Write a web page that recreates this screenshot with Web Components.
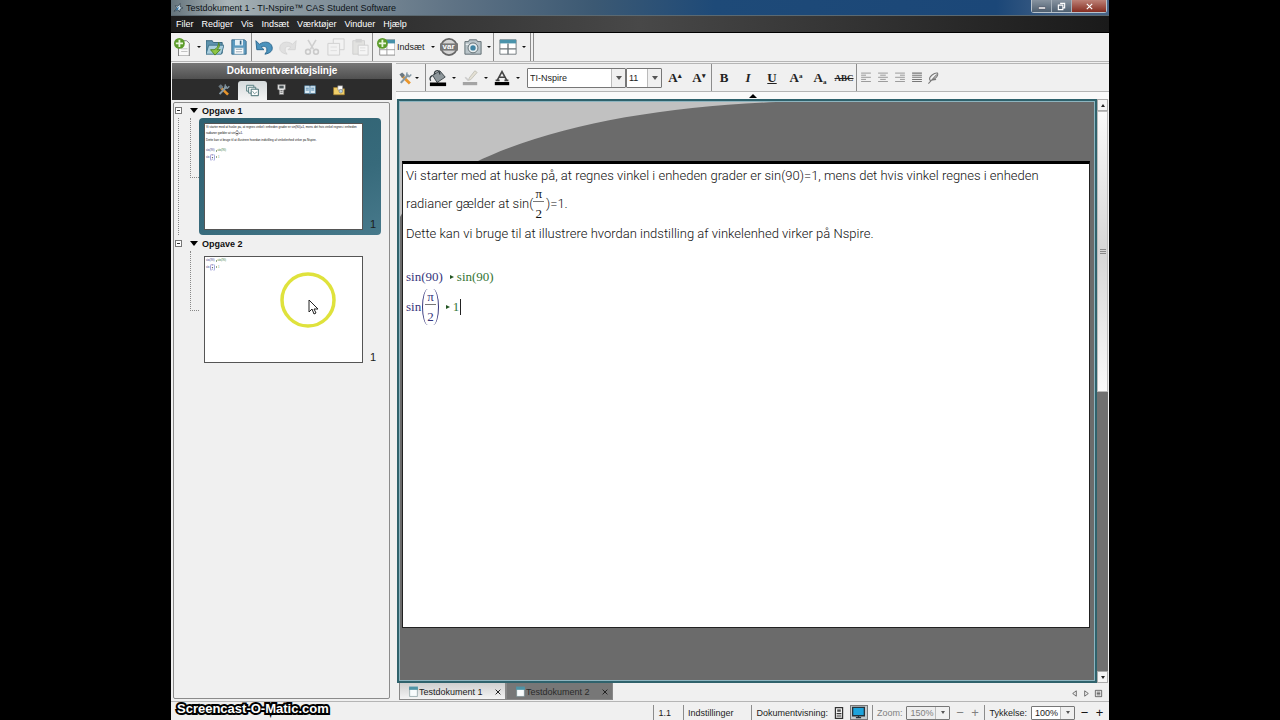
<!DOCTYPE html>
<html lang="da">
<head>
<meta charset="utf-8">
<title>Testdokument 1 - TI-Nspire™ CAS Student Software</title>
<style>
  body {
    margin: 0;
    background: #000;
    font: 9px/12px "Liberation Sans", Arial, sans-serif;
    color: #1c1c1c;
  }
</style>
</head>
<body>
<nspire-app></nspire-app>

<script>
const ICONS = {
  app: '<path d="M2 15l5-6-3-4 5 1 4-5 0 6 5 2-5 2-1 5-3-4z" fill="#cfe0ea" stroke="#14232f"/><path d="M6 13l4-5" stroke="#2a72a8" stroke-width="2"/>',
  add: '<path d="M5 3h9l3 3v14H5z" fill="#f8f8f8" stroke="#777"/><path d="M8 12h7M8 15h7" stroke="#bbb"/><circle cx="6" cy="6" r="6" fill="#5c9c2b"/><path d="M6 2v8M2 6h8" stroke="#e8f5dc" stroke-width="2"/>',
  open: '<path d="M0 3h7l1 2h10v12H0z" fill="#5e93ad" stroke="#2f6079"/><path d="M3 8h17l-3 10H0z" fill="#a9cede" stroke="#3d7088"/><path d="M14 5c2 4 0 7-2 8h4l-6 6-5-6h4c3-1 5-4 5-8z" fill="#8fc744" stroke="#4d8220"/>',
  save: '<path d="M1 1h16l2 2v16H1z" fill="#5b9ac0" stroke="#2d5f80"/><path d="M5 1h10v7H5z" fill="#e6f0f6"/><path d="M12 2v5" stroke="#2d5f80" stroke-width="2"/><path d="M4 11h12v8H4z" fill="#fff" stroke="#7aa5bd"/><path d="M6 13h8M6 16h8" stroke="#89a"/>',
  undo: '<path d="M1 3l1 10h8l-3-3c4-2 7 0 6 5l-2 3c6-1 9-4 8-8-1-6-9-7-14-3z" fill="#4b93bd" stroke="#27648c"/>',
  redo: '<path d="M19 3l-1 10h-8l3-3c-4-2-7 0-6 5l2 3c-6-1-9-4-8-8 1-6 9-7 14-3z" fill="#e0e0e0" stroke="#d4d4d4"/>',
  cut: '<path d="M5 1l7 12M15 1L8 13" stroke="#cfcfcf" stroke-width="2"/><circle cx="5" cy="16" r="3" fill="none" stroke="#cacaca" stroke-width="2"/><circle cx="15" cy="16" r="3" fill="none" stroke="#cacaca" stroke-width="2"/>',
  copy: '<path d="M7 1h12v12H7z" fill="#f2f2f2" stroke="#cecece"/><path d="M1 6h13v13H1z" fill="#f2f2f2" stroke="#cecece"/><path d="M4 10h7M4 14h7" stroke="#ddd"/>',
  paste: '<path d="M2 3h13v15H2z" fill="#e2e2e0" stroke="#cecece"/><path d="M5 1h7v4H5z" fill="#d2d2d2"/><path d="M8 8h11v11H8z" fill="#f5f5f5" stroke="#cecece"/><path d="M10 11h6M10 14h6" stroke="#ddd"/>',
  insert: '<path d="M3 2h17v17H3z" fill="#fff" stroke="#888"/><path d="M3 2h17v4H3z" fill="#4690a8"/><path d="M11 6v13M3 13h17" stroke="#999"/><circle cx="6" cy="6" r="6" fill="#5c9c2b"/><path d="M6 2v8M2 6h8" stroke="#e8f5dc" stroke-width="2"/>',
  ring: '<circle cx="10" cy="10" r="9" fill="#d5d5d5" stroke="#666" stroke-width="2"/><path d="M0 6h20v8H0z" fill="#777"/>',
  camera: '<path d="M1 4h4l1-2h8l1 2h4v14H1z" fill="#b9c4c9" stroke="#59666c"/><circle cx="10" cy="11" r="5.5" fill="#e8eef0" stroke="#59666c"/><circle cx="10" cy="11" r="3" fill="#4184a3"/><path d="M2 7h3" stroke="#fff"/>',
  layout: '<path d="M1 2h18v16H1z" fill="#fff" stroke="#6b7478"/><path d="M1 2h18v4H1z" fill="#4a93ab"/><path d="M10 6v12M1 12h18" stroke="#6b7478" stroke-width="1.5"/>',
  tools: '<path d="M6 7l11 11" stroke="#e9952b" stroke-width="4"/><path d="M15 5L4 17" stroke="#8599a5" stroke-width="3"/><path d="M2 5l4-3 4 4-4 4z" fill="#6b7880"/><path d="M13 2l-1 5 4 1 3-3" fill="none" stroke="#8599a5" stroke-width="2"/>',
  bucket: '<path d="M4 7l8-5 6 7-9 6z" fill="#8e979b" stroke="#374044"/><path d="M4 7C0 9 1 12 2 13M6 6c0-5 6-6 6 0" fill="none" stroke="#374044" stroke-width="1.5"/><path d="M1 15h18v4H1z" fill="#000"/>',
  pen: '<path d="M16 1l3 2-8 9-3 1 1-3z" fill="#e4e0d4" stroke="#bcbcb4"/><path d="M4 9l4 4" stroke="#ccc" stroke-width="2"/><path d="M1 15h18v4H1z" fill="#a4a4a4"/>',
  fontcolor: '<path d="M4 13L10 2l6 11M6 9h8M2 13h5M13 13h5" fill="none" stroke="#444" stroke-width="2"/><path d="M1 15h18v4H1z" fill="#000"/>',
  left: '<path d="M3 3h14M3 6h7M3 9h14M3 12h7M3 15h14" stroke="#777"/>',
  center: '<path d="M3 3h14M6 6h8M3 9h14M6 12h8M3 15h14" stroke="#777"/>',
  right: '<path d="M3 3h14M10 6h7M3 9h14M10 12h7M3 15h14" stroke="#777"/>',
  justify: '<path d="M3 3h14M3 6h14M3 9h14M3 12h14M3 15h14" stroke="#777" stroke-width="1.5"/>',
  link: '<path d="M4 13c-2-5 7-11 11-10 2 4-6 12-11 10zM2 18L14 5M8 13l5-1" fill="none" stroke="#777" stroke-width="1.5"/>',
  pages: '<path d="M1 2h11v9H1z" fill="#f4f6f5" stroke="#557d80" stroke-width="1.5"/><path d="M4 5h11v9H4z" fill="#f4f6f5" stroke="#557d80" stroke-width="1.5"/><path d="M8 8h11v10H8z" fill="#fff" stroke="#436c70" stroke-width="1.5"/><path d="M10 11l3 4 4-3" fill="none" stroke="#436c70"/>',
  handheld: '<path d="M3 1h14v9l-3 1v8H6v-8l-3-1z" fill="#e6e6e6" stroke="#666"/><path d="M6 3h8v5H6z" fill="#4c5558"/><path d="M8 12h4M8 15h4" stroke="#555" stroke-width="1.5"/>',
  device: '<path d="M4 1h12v18H4z" fill="#f2f2f2" stroke="#333" stroke-width="2"/><path d="M7 4h6v4H7z" fill="#555"/><path d="M6 11h8M6 15h8" stroke="#333" stroke-width="2"/>',
  book: '<path d="M1 3h8l1 1 1-1h8v13h-8l-1 1-1-1H1z" fill="#dcebf4" stroke="#457ea5"/><path d="M10 4v12M3 7h5M3 10h5M12 7h5M12 10h5" stroke="#457ea5" stroke-width="1.5"/>',
  folder: '<path d="M1 6h7l2 2h9v10H1z" fill="#f1cf68" stroke="#a67e28"/><path d="M8 3h8v7H8z" fill="#fff" stroke="#888"/><circle cx="13" cy="12" r="3" fill="#b7d2e0" stroke="#777"/>',
  doc: '<path d="M3 4h14v15H3z" fill="#f8fbfc" stroke="#658085"/><path d="M2 1h16v6H2z" fill="#4f93a5"/>',
  screen: '<path d="M1 2h18v13H1z" fill="#1da4dc" stroke="#25343c" stroke-width="2"/><path d="M6 18h8M10 15v3" stroke="#25343c" stroke-width="2"/>',
  prev: '<path d="M14 4v12L6 10z" fill="none" stroke="#333" stroke-width="1.5"/>',
  next: '<path d="M6 4v12l8-6z" fill="none" stroke="#333" stroke-width="1.5"/>',
  list: '<path d="M3 3h14v14H3zM6 7h8M6 10h8M6 13h8" fill="none" stroke="#333" stroke-width="1.5"/>',
  close: '<path d="M4 4l12 12M16 4L4 16" stroke="currentColor" stroke-width="2.5"/>',
  minimize: '<path d="M3 12h14v4H3z" fill="#fff" stroke="#445"/>',
  restore: '<path d="M7 3h10v10h-4M3 7h10v10H3z" fill="none" stroke="#fff" stroke-width="2.5"/>'
};

// attaches an open shadow root holding the given markup
class BaseElement extends HTMLElement {
  connectedCallback() {
    if (this.shadowRoot) return;
    this.attachShadow({ mode: 'open' });
    this.shadowRoot.innerHTML = `<style>* { box-sizing: border-box; }</style>${this.render()}`;
  }
}

class NsIcon extends BaseElement {
  render() {
    const size = this.getAttribute('size') || 18;
    return `
      <style>
        :host { display: block; flex: none; width: ${size}px; height: ${size}px; }
        svg { display: block; width: 100%; height: 100%; }
      </style>
      <svg viewBox="0 0 20 20" fill="none" aria-hidden="true">${ICONS[this.getAttribute('name')]}</svg>
    `;
  }
}
customElements.define('ns-icon', NsIcon);

class ToolButton extends BaseElement {
  render() {
    return `
      <style>
        :host { display: block; flex: none; width: 24px; }
        :host([small]) { width: 17px; }
        :host([wide]) { width: auto; }
        button {
          display: flex; align-items: center; justify-content: center; gap: 2px;
          width: 100%; height: 24px; padding: 0; border: 0; background: none;
          font: inherit; color: inherit;
        }
      </style>
      <button type="button" aria-label="${this.getAttribute('label') || ''}"><slot></slot></button>
    `;
  }
}
customElements.define('tool-button', ToolButton);

class CaretButton extends BaseElement {
  render() {
    return `
      <style>
        :host { display: block; flex: none; }
        button { display: grid; place-items: center; width: 8px; height: 24px; padding: 0; border: 0; background: none; }
        i { border: 2px solid transparent; border-top-color: #111; border-bottom: 0; }
      </style>
      <button type="button" aria-label="Flere valg"><i></i></button>
    `;
  }
}
customElements.define('caret-button', CaretButton);

class ToolDivider extends BaseElement {
  render() {
    return `
      <style>
        :host { display: block; flex: none; align-self: stretch; width: 1px; background: #8c8c8c; }
      </style>
    `;
  }
}
customElements.define('tool-divider', ToolDivider);

class ComboBox extends BaseElement {
  render() {
    return `
      <style>
        :host { display: grid; flex: none; width: 44px; height: 14px; }
        :host([tall]) { height: 20px; }
        :host([tall]) select { padding-left: 2px; }
        :host([font]) { width: 99px; }
        :host([points]) { width: 36px; }
        :host([muted]) { color: #808080; }
        select, span { grid-area: 1 / 1; }
        select {
          appearance: none; width: 100%; margin: 0; padding: 0 12px 0 3px;
          border: 1px solid #777; border-radius: 1px; background: #fff;
          font: inherit; color: inherit;
        }
        :host([muted]) select { background: #eee; }
        span {
          justify-self: end; display: grid; place-items: center; width: 14px; margin: 1px;
          background: #f0f0f0; border-left: 1px solid #bbb; pointer-events: none;
        }
        i { border: 3px solid transparent; border-top: 4px solid #555; border-bottom: 0; }
        :host(:not([tall])) i { border-width: 3px 2px 0; }
      </style>
      <select aria-label="${this.getAttribute('label')}"><option>${this.getAttribute('value')}</option></select>
      <span><i></i></span>
    `;
  }
}
customElements.define('combo-box', ComboBox);

class TitleBar extends BaseElement {
  render() {
    return `
      <style>
        :host {
          display: flex; align-items: flex-start; justify-content: space-between; height: 16px;
          background: linear-gradient(90deg, #65747c 0, #a9b4b8 6%, #8e9ba2 12%, #5f7385 30%, #3c5973 45%, #1e4a78 58%, #1b4778 88%, #486487 96%);
          border-bottom: 1px solid #5b6971;
        }
        h1 {
          display: flex; align-items: center; gap: 2px; margin: 0; padding-left: 2px;
          font-size: 9px; font-weight: normal; line-height: 16px; color: #0c1216;
        }
        div { display: flex; margin-right: 2px; border: 1px solid #b8c3cc; border-top: 0; border-radius: 0 0 3px 3px; }
        button {
          display: grid; place-items: center; width: 20px; height: 12px; padding: 0;
          border: 0; border-right: 1px solid #a5b0ba; color: #fff;
          background: linear-gradient(#8793a0, #4e5f70);
        }
        button:last-child { width: 34px; border: 0; background: linear-gradient(#bd8177, #852c20); }
      </style>
      <h1><ns-icon name="app" size="11"></ns-icon><slot></slot></h1>
      <div>
        <button type="button" aria-label="Minimer"><ns-icon name="minimize" size="10"></ns-icon></button>
        <button type="button" aria-label="Gendan"><ns-icon name="restore" size="9"></ns-icon></button>
        <button type="button" aria-label="Luk"><ns-icon name="close" size="9"></ns-icon></button>
      </div>
    `;
  }
}
customElements.define('title-bar', TitleBar);

class MenuBar extends BaseElement {
  render() {
    const items = this.getAttribute('items').split(',');
    return `
      <style>
        :host { display: block; background: linear-gradient(90deg, #1c1c1c, #484848 50%, #1a1a1a); border-bottom: 1px solid #000; }
        nav { display: flex; gap: 8px; padding-left: 5px; }
        button { padding: 0; border: 0; background: none; font: inherit; line-height: 16px; color: #fff; }
      </style>
      <nav>${items.map(item => `<button type="button">${item}</button>`).join('')}</nav>
    `;
  }
}
customElements.define('menu-bar', MenuBar);

class MainToolbar extends BaseElement {
  render() {
    return `
      <style>
        :host { display: flex; align-items: center; height: 29px; background: #f0f0f0; border-bottom: 1px solid #b5b5b5; }
        .insert { padding: 0 4px; }
        .var { display: grid; place-items: center; }
        .var > * { grid-area: 1 / 1; }
        .var span { font: bold 8px/8px "Liberation Sans", sans-serif; color: #fff; }
        .layout { padding-left: 2px; width: 26px; }
        .tail { display: flex; gap: 2px; align-self: stretch; padding-left: 2px; }
      </style>
      <tool-button label="Nyt"><ns-icon name="add"></ns-icon></tool-button><caret-button></caret-button>
      <tool-button label="Åbn"><ns-icon name="open"></ns-icon></tool-button>
      <tool-button label="Gem"><ns-icon name="save" size="16"></ns-icon></tool-button>
      <tool-divider></tool-divider>
      <tool-button label="Fortryd"><ns-icon name="undo"></ns-icon></tool-button>
      <tool-button label="Gentag"><ns-icon name="redo"></ns-icon></tool-button>
      <tool-button label="Klip"><ns-icon name="cut" size="16"></ns-icon></tool-button>
      <tool-button label="Kopier"><ns-icon name="copy"></ns-icon></tool-button>
      <tool-button label="Sæt ind"><ns-icon name="paste"></ns-icon></tool-button>
      <tool-divider></tool-divider>
      <tool-button class="insert" label="Indsæt" wide><ns-icon name="insert"></ns-icon>Indsæt</tool-button><caret-button></caret-button>
      <tool-button label="Variabler"><span class="var"><ns-icon name="ring"></ns-icon><span>var</span></span></tool-button>
      <tool-button label="Billede"><ns-icon name="camera"></ns-icon></tool-button><caret-button></caret-button>
      <tool-divider></tool-divider>
      <tool-button class="layout" label="Sidelayout"><ns-icon name="layout"></ns-icon></tool-button><caret-button></caret-button>
      <div class="tail"><tool-divider></tool-divider><tool-divider></tool-divider></div>
    `;
  }
}
customElements.define('main-toolbar', MainToolbar);

class FormatBar extends BaseElement {
  render() {
    return `
      <style>
        :host { display: flex; align-items: center; height: 29px; border: solid #b5b5b5; border-width: 1px 0; background: #f0f0f0; }
        .glyph { font: bold 13px/16px "Liberation Serif", serif; color: #222; }
        .abc { font-size: 9px; text-decoration: line-through; }
        .u { text-decoration: underline; }
        sup, sub { font-size: 7px; line-height: 0; }
        sup { vertical-align: 4px; }
        sub { vertical-align: -2px; }
        .first { margin-left: 4px; }
        .combos { display: flex; padding: 0 1px 0 5px; }
      </style>
      <tool-button label="Værktøjer" small><ns-icon name="tools" size="14"></ns-icon></tool-button><caret-button></caret-button>
      <tool-divider class="first"></tool-divider>
      <tool-button label="Fyldfarve"><ns-icon name="bucket"></ns-icon></tool-button><caret-button></caret-button>
      <tool-button label="Stregfarve"><ns-icon name="pen" size="16"></ns-icon></tool-button><caret-button></caret-button>
      <tool-button label="Tekstfarve"><ns-icon name="fontcolor" size="16"></ns-icon></tool-button><caret-button></caret-button>
      <div class="combos">
        <combo-box font tall label="Skrifttype" value="TI-Nspire"></combo-box>
        <combo-box points tall label="Størrelse" value="11"></combo-box>
      </div>
      <tool-button label="Større"><span class="glyph">A<sup>▴</sup></span></tool-button>
      <tool-button label="Mindre"><span class="glyph">A<sup>▾</sup></span></tool-button>
      <tool-divider></tool-divider>
      <tool-button label="Fed"><b class="glyph">B</b></tool-button>
      <tool-button label="Kursiv"><em class="glyph" style="font-style: italic">I</em></tool-button>
      <tool-button label="Understreget"><span class="glyph u">U</span></tool-button>
      <tool-button label="Hævet"><span class="glyph">A<sup>a</sup></span></tool-button>
      <tool-button label="Sænket"><span class="glyph">A<sub>a</sub></span></tool-button>
      <tool-button label="Gennemstreget"><span class="glyph abc">ABC</span></tool-button>
      <tool-divider></tool-divider>
      <tool-button label="Venstrestil" small><ns-icon name="left" size="14"></ns-icon></tool-button>
      <tool-button label="Centrer" small><ns-icon name="center" size="14"></ns-icon></tool-button>
      <tool-button label="Højrestil" small><ns-icon name="right" size="14"></ns-icon></tool-button>
      <tool-button label="Lige margener" small><ns-icon name="justify" size="14"></ns-icon></tool-button>
      <tool-button label="Link" small><ns-icon name="link" size="14"></ns-icon></tool-button>
    `;
  }
}
customElements.define('format-bar', FormatBar);

class MathFraction extends BaseElement {
  render() {
    return `
      <style>
        :host { display: inline-grid; justify-items: center; margin-right: 2px; color: inherit; font: 13px/14px "Liberation Serif", serif; }
        :host([tight]) { margin-right: 0; }
        :host([mini]) { margin-right: 0; font-size: 3px; line-height: 3px; }
        span { padding: 0 2px; }
        .top { border-bottom: 1px solid #777; }
        .bottom { padding-top: 5px; }
        :host([mini]) span { padding: 0; }
      </style>
      <span class="top">π</span><span class="bottom">2</span>
    `;
  }
}
customElements.define('math-fraction', MathFraction);

// one notes page, in full size or as a thumbnail in the page sorter
class NotesText extends BaseElement {
  render() {
    const mini = this.hasAttribute('mini') ? 'mini' : '';
    const intro = this.hasAttribute('intro') ? `
      <p>Vi starter med at huske på, at regnes vinkel i enheden grader er sin(90)=1, mens det hvis vinkel regnes i enheden</p>
      <p class="second">radianer gælder at sin(<math-fraction ${mini}></math-fraction>)=1.</p>
      <p class="third">Dette kan vi bruge til at illustrere hvordan indstilling af vinkelenhed virker på Nspire.</p>` : '';
    return `
      <style>
        :host { display: block; padding: 0 3px; font: 300 13px/24px Roboto, "Open Sans", sans-serif; color: #111; }
        p { display: flex; align-items: center; margin: 0; height: 24px; white-space: nowrap; }
        .second { height: 32px; }
        .third { height: 28px; }
        .math { font: 13px/20px "Liberation Serif", serif; color: #36367c; }
        .first { margin-top: 17px; }
        .last { height: 36px; }
        .result { color: #357535; }
        .arrow { margin: 0 3px 0 7px; border: 2px solid transparent; border-left: 4px solid #225522; border-right: 0; }
        .paren { display: flex; align-items: center; height: 36px; margin-left: 1px; padding: 0 2px; border: solid #36367c; border-width: 0 1px; border-radius: 6px / 18px; }
        .caret { width: 1px; height: 16px; margin-left: 1px; background: #222; }
        :host([mini]) { padding: 0 1px; font: 3px/5px "Liberation Sans", sans-serif; }
        :host([mini]) p { height: 5px; }
        :host([mini]) .second, :host([mini]) .third { height: 7px; }
        :host([mini]) .math { font-size: 3px; line-height: 5px; }
        :host([mini][intro]) .first { margin-top: 4px; }
        :host([mini]) .first { margin-top: 0; }
        :host([mini]) .last { height: 8px; }
        :host([mini]) .arrow { margin: 0 1px; border-width: 1px; }
        :host([mini]) .paren { height: 7px; margin: 0; padding: 0 1px; border-color: #a9a9dd; border-radius: 2px; }
        :host([mini]) .caret { display: none; }
      </style>
      ${intro}
      <p class="math first">sin(90)<i class="arrow"></i><span class="result">sin(90)</span></p>
      <p class="math last">sin<span class="paren"><math-fraction tight ${mini}></math-fraction></span><i class="arrow"></i><span class="result">1</span><i class="caret"></i></p>
    `;
  }
}
customElements.define('notes-text', NotesText);

class PageThumb extends BaseElement {
  render() {
    return `
      <style>
        :host { display: flex; flex: 1; align-items: flex-end; padding: 5px 5px 5px 5px; }
        :host([selected]) { background: linear-gradient(160deg, #2f6171, #376a7b 60%, #47798b); border-radius: 4px; }
        .sheet { width: 159px; height: 107px; padding-top: 1px; border: 1px solid #555; background: #fff; overflow: hidden; }
        .number { flex: 1; text-align: right; font-size: 11px; }
      </style>
      <div class="sheet"><slot></slot></div>
      <span class="number">1</span>
    `;
  }
}
customElements.define('page-thumb', PageThumb);

class ProblemGroup extends BaseElement {
  render() {
    return `
      <style>
        :host { display: block; margin-bottom: 1px; }
        header { display: flex; align-items: center; height: 15px; }
        .toggle { display: grid; place-items: center; width: 9px; height: 7px; padding: 0; margin-right: 7px; border: 0; background: none; }
        .toggle span { width: 7px; height: 7px; border: 1px solid #777; background: linear-gradient(#333, #333) center / 3px 1px no-repeat #fff; }
        .tri { border: 4px solid transparent; border-top: 5px solid #000; border-bottom: 0; }
        h2 { margin: 0 0 0 4px; font-size: 9px; line-height: 14px; color: #111; }
        .body { display: flex; padding-right: 8px; }
        .outer { width: 16px; padding-left: 4px; }
        .outer i { display: block; height: 100%; border-left: 1px dotted #888; }
        :host([last]) .outer i { border: 0; }
        .inner { width: 9px; height: 60px; border: dotted #888; border-width: 0 0 1px 1px; }
      </style>
      <header>
        <button class="toggle" type="button" aria-label="Fold sammen"><span></span></button>
        <i class="tri"></i><h2>${this.getAttribute('heading')}</h2>
      </header>
      <div class="body">
        <div class="outer"><i></i></div>
        <div class="inner"></div>
        <slot></slot>
      </div>
    `;
  }
}
customElements.define('problem-group', ProblemGroup);

class SidePanel extends BaseElement {
  render() {
    return `
      <style>
        :host { display: flex; flex-direction: column; flex: none; width: 220px; margin: 1px 0 2px 1px; }
        h2 { margin: 0; background: linear-gradient(#777, #505050); color: #fff; font-size: 10px; line-height: 16px; text-align: center; }
        nav { display: flex; justify-content: center; height: 21px; padding-right: 2px; background: #2c2c2c; }
        button { display: grid; place-items: center; width: 29px; height: 21px; padding: 0; border: 0; background: none; }
        button.active { align-self: flex-end; height: 19px; border-radius: 3px 3px 0 0; background: linear-gradient(#d5dadb, #f4f4f4); }
        section { flex: 1; margin: 2px 2px 0 1px; border: 1px solid #8b8b8b; border-radius: 2px; background: #f0f0f0; }
      </style>
      <h2>Dokumentværktøjslinje</h2>
      <nav>
        <button type="button" aria-label="Værktøjer"><ns-icon name="tools" size="13"></ns-icon></button>
        <button type="button" aria-label="Sidesortering" class="active"><ns-icon name="pages" size="13"></ns-icon></button>
        <button type="button" aria-label="Håndholdt"><ns-icon name="handheld" size="11"></ns-icon></button>
        <button type="button" aria-label="Hjælpeprogrammer"><ns-icon name="book" size="12"></ns-icon></button>
        <button type="button" aria-label="Indhold"><ns-icon name="folder" size="12"></ns-icon></button>
      </nav>
      <section>
        <problem-group heading="Opgave 1">
          <page-thumb selected><notes-text mini intro></notes-text></page-thumb>
        </problem-group>
        <problem-group heading="Opgave 2" last>
          <page-thumb><notes-text mini></notes-text></page-thumb>
        </problem-group>
      </section>
    `;
  }
}
customElements.define('side-panel', SidePanel);

class ScrollRail extends BaseElement {
  render() {
    return `
      <style>
        :host { display: flex; flex-direction: column; flex: none; width: 11px; margin-right: 1px; background: #707070; }
        button { display: grid; place-items: center; height: 12px; padding: 0; border: 1px solid #aaa; background: #f5f5f5; }
        .up { border: 2px solid transparent; border-bottom: 3px solid #222; border-top: 0; }
        .down { border: 2px solid transparent; border-top: 3px solid #222; border-bottom: 0; }
        .thumb {
          display: grid; place-content: center; flex: 1; border: 1px solid #bbb;
          background: linear-gradient(#fafafa, #d6d6d6 50%, #fafafa);
        }
        .grip { width: 6px; height: 5px; border: solid #888; border-width: 1px 0; background: linear-gradient(#888, #888) center / 6px 1px no-repeat; }
        .track { flex: 1; }
      </style>
      <button type="button" aria-label="Rul op"><i class="up"></i></button>
      <div class="thumb"><i class="grip"></i></div>
      <div class="track"></div>
      <button type="button" aria-label="Rul ned"><i class="down"></i></button>
    `;
  }
}
customElements.define('scroll-rail', ScrollRail);

class DocumentView extends BaseElement {
  render() {
    return `
      <style>
        :host { display: flex; flex: 1; min-height: 0; margin-left: 1px; }
        .frame {
          position: relative; display: flex; flex: 1; min-width: 0; padding: 60px 5px 53px 3px;
          border: 2px solid #2f626c; outline: 1px solid #8db4bf; outline-offset: -3px; background: #6b6b6b; overflow: hidden;
        }
        .swoosh { position: absolute; top: 1px; left: 1px; width: 400px; height: 120px; }
        .page { position: relative; flex: 1; min-width: 0; border: 1px solid #222; border-top: 3px solid #000; background: #fff; overflow: hidden; }
      </style>
      <div class="frame">
        <svg class="swoosh" viewBox="0 0 400 120" aria-hidden="true"><path d="M0 0h376C256 5 150 24 74 61 36 78 12 94 0 115z" fill="#c1c1c1"/></svg>
        <div class="page"><slot></slot></div>
      </div>
      <scroll-rail></scroll-rail>
    `;
  }
}
customElements.define('document-view', DocumentView);

class DocTab extends BaseElement {
  render() {
    return `
      <style>
        :host { display: flex; align-items: center; width: 107px; padding: 1px 3px 0 8px; background: linear-gradient(#cfcfcf, #f4f4f4); border: solid #888; border-width: 0 1px 1px; }
        :host([inactive]) { background: #777; color: #2a2a2a; }
        a { flex: 1; color: inherit; text-decoration: none; }
        button { display: block; padding: 0; border: 0; background: none; color: #222; }
      </style>
      <ns-icon name="doc" size="11"></ns-icon>
      <a href="#"><slot></slot></a>
      <button type="button" aria-label="Luk"><ns-icon name="close" size="8"></ns-icon></button>
    `;
  }
}
customElements.define('doc-tab', DocTab);

class WorkArea extends BaseElement {
  render() {
    return `
      <style>
        :host { display: flex; flex-direction: column; flex: 1; min-width: 0; margin: 1px 0 1px 4px; }
        .fold { display: grid; place-items: center; height: 7px; padding: 0; border: 0; background: #fafafa; }
        .fold i { border: 4px solid transparent; border-bottom-color: #000; border-top: 0; }
        .tabs { display: flex; height: 17px; padding-left: 3px; }
        .nav { display: flex; align-items: center; gap: 3px; margin-left: auto; padding: 3px 6px 0 0; }
        .nav button { padding: 0; border: 0; background: none; }
      </style>
      <format-bar></format-bar>
      <button class="fold" type="button" aria-label="Skjul værktøjslinje"><i></i></button>
      <document-view><slot></slot></document-view>
      <div class="tabs">
        <doc-tab>Testdokument 1</doc-tab>
        <doc-tab inactive>Testdokument 2</doc-tab>
        <div class="nav">
          <button type="button" aria-label="Forrige"><ns-icon name="prev" size="9"></ns-icon></button>
          <button type="button" aria-label="Næste"><ns-icon name="next" size="9"></ns-icon></button>
          <button type="button" aria-label="Liste"><ns-icon name="list" size="9"></ns-icon></button>
        </div>
      </div>
    `;
  }
}
customElements.define('work-area', WorkArea);

class StatusBar extends BaseElement {
  render() {
    return `
      <style>
        :host { display: flex; align-items: flex-start; justify-content: space-between; height: 19px; border-top: 1px solid #b5b5b5; background: #f0f0f0; }
        .mark { padding-left: 6px; font-size: 13px; font-weight: bold; line-height: 14px; color: #fff; -webkit-text-stroke: 4px #000; paint-order: stroke fill; }
        .items { display: flex; align-items: center; gap: 4px; height: 18px; padding: 3px 4px 0 0; }
        button { display: grid; place-items: center; width: 11px; padding: 0; border: 0; background: none; font: 13px/14px "Liberation Sans", sans-serif; color: #111; }
        button.view { width: 14px; }
        button.on { width: 18px; height: 15px; border: 1px solid #777; background: #c4c9cb; }
        .muted { color: #808080; }
        .wide { padding-right: 14px; }
        .page { padding-right: 8px; }
      </style>
      <span class="mark">Screencast-O-Matic.com</span>
      <div class="items">
        <tool-divider></tool-divider>
        <span class="page">1.1</span>
        <tool-divider></tool-divider>
        <span class="wide">Indstillinger</span>
        <tool-divider></tool-divider>
        <span>Dokumentvisning:</span>
        <button class="view" type="button" aria-label="Håndholdt"><ns-icon name="device" size="12"></ns-icon></button>
        <button class="on" type="button" aria-label="Computer"><ns-icon name="screen" size="13"></ns-icon></button>
        <tool-divider></tool-divider>
        <span class="muted">Zoom:</span>
        <combo-box muted label="Zoom" value="150%"></combo-box>
        <button class="muted" type="button">−</button>
        <button class="muted" type="button">+</button>
        <tool-divider></tool-divider>
        <span>Tykkelse:</span>
        <combo-box label="Tykkelse" value="100%"></combo-box>
        <button type="button">−</button>
        <button type="button">+</button>
      </div>
    `;
  }
}
customElements.define('status-bar', StatusBar);

class PointerHalo extends BaseElement {
  render() {
    return `
      <style>
        :host { position: absolute; left: 109px; top: 272px; width: 56px; height: 56px; pointer-events: none; }
        svg { display: block; }
      </style>
      <svg width="56" height="56" viewBox="0 0 56 56" aria-hidden="true">
        <circle cx="28" cy="28" r="26" fill="none" stroke="#dfe23c" stroke-width="3.5"/>
        <path d="M29 28v12l3-3 2 5 2-1-2-4h4z" fill="#fff" stroke="#222"/>
      </svg>
    `;
  }
}
customElements.define('pointer-halo', PointerHalo);

class NspireApp extends BaseElement {
  render() {
    return `
      <style>
        :host { position: relative; display: flex; flex-direction: column; min-height: 100vh; margin: 0 171px; background: #f0f0f0; }
        main { display: flex; flex: 1; min-height: 0; }
      </style>
      <title-bar>Testdokument 1 - TI-Nspire™ CAS Student Software</title-bar>
      <menu-bar items="Filer,Rediger,Vis,Indsæt,Værktøjer,Vinduer,Hjælp"></menu-bar>
      <main-toolbar></main-toolbar>
      <main>
        <side-panel></side-panel>
        <work-area><notes-text intro></notes-text></work-area>
      </main>
      <status-bar></status-bar>
      <pointer-halo></pointer-halo>
    `;
  }
}
customElements.define('nspire-app', NspireApp);
</script>
</body>
</html>
